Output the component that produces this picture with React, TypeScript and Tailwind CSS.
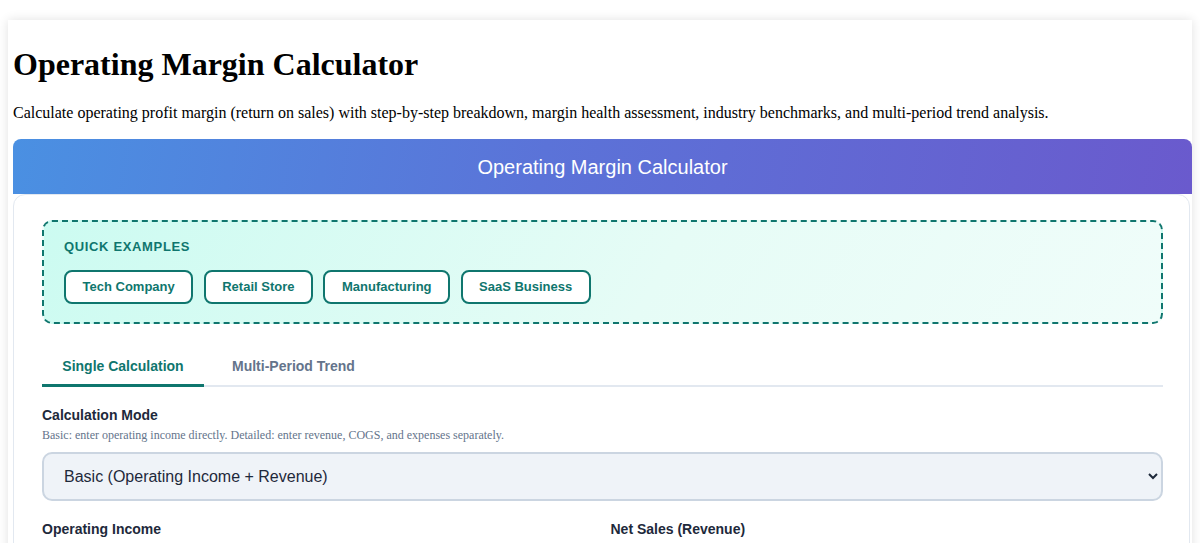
import { useState } from "react";

const examples = ["Tech Company", "Retail Store", "Manufacturing", "SaaS Business"];

const sans = "font-['Liberation_Sans',Arial,sans-serif]";
const serif = "font-['Liberation_Serif','Times_New_Roman',serif]";

export default function App() {
  const [tab, setTab] = useState<"single" | "trend">("single");

  return (
    <div className={`min-h-[543px] bg-white pt-[20px] ${serif}`}>
      {/* page card */}
      <div className="mx-[8px] bg-white p-[5px] pb-0 shadow-[0_0_10px_rgba(0,0,0,0.12)]">
        <h1 className="my-[21px] text-[32px] font-bold leading-[37px] text-black">
          Operating Margin Calculator
        </h1>
        <p className="mb-[17px] text-[16px] leading-[18px] text-black">
          Calculate operating profit margin (return on sales) with step-by-step breakdown, margin health
          assessment, industry benchmarks, and multi-period trend analysis.
        </p>

        {/* calculator */}
        <div className="-mr-[5px]">
          <div
            className={`flex h-[55px] items-center justify-center rounded-t-[8px] bg-[linear-gradient(100deg,#4a90e2_0%,#5b73d8_45%,#6a5acd_100%)] text-[20px] text-white ${sans}`}
          >
            Operating Margin Calculator
          </div>

          <div className={`mr-[2px] rounded-[12px] border border-[#e2e8f0] bg-white pl-[28px] pr-[26px] pt-[25px] pb-[40px] ${sans}`}>
            {/* quick examples */}
            <div className="rounded-[10px] border-2 border-dashed border-[#0f766e] bg-[linear-gradient(120deg,#ccfbf1_0%,#e6fcf6_55%,#f0fdfa_100%)] px-[20px] pt-[17px] pb-[18px]">
              <div className="mb-[15px] text-[13px] font-bold uppercase leading-[16px] tracking-[0.05em] text-[#0f766e]">
                Quick Examples
              </div>
              <div className="flex gap-[10.5px]">
                {examples.map((e) => (
                  <button
                    key={e}
                    className="h-[34px] rounded-[8px] border-2 border-[#0f766e] bg-white px-[16.5px] text-[13px] font-bold text-[#0f766e]"
                  >
                    {e}
                  </button>
                ))}
              </div>
            </div>

            {/* tabs */}
            <div className="mt-[22px] flex border-b-2 border-[#e2e8f0]">
              <button
                onClick={() => setTab("single")}
                className={`-mb-[2px] w-[162px] border-b-[3px] pt-[12px] pb-[10px] text-[14px] font-bold leading-[16px] ${
                  tab === "single" ? "border-[#0f766e] text-[#0f766e]" : "border-transparent text-[#64748b]"
                }`}
              >
                Single Calculation
              </button>
              <button
                onClick={() => setTab("trend")}
                className={`-mb-[2px] border-b-[3px] px-[28px] pt-[12px] pb-[10px] text-[14px] font-bold leading-[16px] ${
                  tab === "trend" ? "border-[#0f766e] text-[#0f766e]" : "border-transparent text-[#64748b]"
                }`}
              >
                Multi-Period Trend
              </button>
            </div>

            {/* mode */}
            <div className="mt-[20px]">
              <div className="text-[14px] font-bold leading-[16px] text-[#1e293b]">Calculation Mode</div>
              <div className={`mt-[5px] text-[12px] leading-[14px] text-[#64748b] ${serif}`}>
                Basic: enter operating income directly. Detailed: enter revenue, COGS, and expenses separately.
              </div>
              <select className="mt-[10px] h-[49px] w-full rounded-[10px] border-2 border-[#cbd5e1] bg-[#eff3f8] pl-[16px] pr-[8px] text-[16px] text-[#1e293b]">
                <option>Basic (Operating Income + Revenue)</option>
                <option>Detailed (Revenue, COGS, Expenses)</option>
              </select>
            </div>

            <div className="mt-[20px] grid grid-cols-2 gap-4">
              <div className="text-[14px] font-bold leading-[16px] text-[#1e293b]">Operating Income</div>
              <div className="text-[14px] font-bold leading-[16px] text-[#1e293b]">Net Sales (Revenue)</div>
            </div>
          </div>
        </div>
      </div>
    </div>
  );
}
